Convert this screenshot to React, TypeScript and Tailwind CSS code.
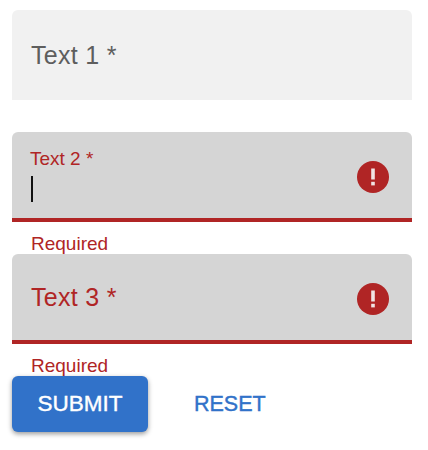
const fontStack = "font-['Liberation_Sans',Arial,sans-serif]";

function ErrorIcon() {
  return (
    <svg width="32" height="32" viewBox="0 0 32 32" className="shrink-0 mt-[4px]">
      <circle cx="16" cy="16" r="16" fill="#b02525" />
      <rect x="14.2" y="7.5" width="3.6" height="11" fill="#f1e4e4" />
      <rect x="14.2" y="20.8" width="3.6" height="3.6" fill="#f1e4e4" />
    </svg>
  );
}

function HelperText() {
  return <div className="h-[32px] pt-[12px] pl-[19px] text-[19px] leading-[20px] text-[#b02525]">Required</div>;
}

export default function App() {
  return (
    <div className={`${fontStack} w-[428px] h-[450px] bg-white pt-[10px] px-3 overflow-hidden`}>
      <div className="w-[400px]">
        {/* Text 1, untouched */}
        <div className="h-[90px] rounded-t-[6px] bg-[#f1f1f1] flex items-center pl-[19px] pt-[2px] text-[25px] tracking-[0.3px] text-[#5e5e5e]">
          Text 1 *
        </div>

        {/* Text 2, focused with error */}
        <div className="mt-[32px] h-[90px] rounded-t-[6px] bg-[#d5d5d5] border-b-4 border-[#b02525] flex items-center justify-between pr-[23px]">
          <div className="pl-[18px] pt-[1px]">
            <div className="text-[19px] leading-[20px] text-[#b02525]">Text 2 *</div>
            <div className="mt-[7px] ml-[1px] w-[2px] h-[26px] bg-[#111111]" />
          </div>
          <ErrorIcon />
        </div>
        <HelperText />

        {/* Text 3, error */}
        <div className="h-[90px] rounded-t-[6px] bg-[#d5d5d5] border-b-4 border-[#b02525] flex items-center justify-between pl-[19px] pr-[23px] text-[25px] tracking-[0.3px] text-[#b02525]">
          <span className="pt-[2px]">Text 3 *</span>
          <ErrorIcon />
        </div>
        <HelperText />

        <div className="flex items-center">
          <button className="w-[136px] h-[56px] rounded-[6px] bg-[#3172c9] text-white text-[22.5px] [-webkit-text-stroke:0.4px_white] shadow-[0_2px_5px_rgba(0,0,0,0.4)]">
            SUBMIT
          </button>
          <button className="ml-[46px] text-[21.5px] text-[#3172c9] [-webkit-text-stroke:0.4px_#3172c9]">RESET</button>
        </div>
      </div>
    </div>
  );
}
